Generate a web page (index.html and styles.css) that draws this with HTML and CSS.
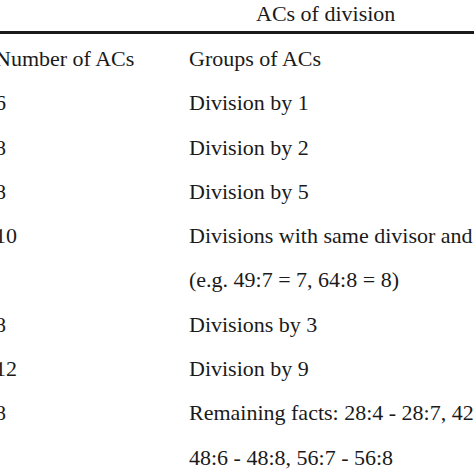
FILE: index.html
```html
<!DOCTYPE html>
<html>
<head>
<meta charset="utf-8">
<link rel="stylesheet" href="styles.css">
</head>
<body>
<div class="page">
  <div class="head">
    <div class="cell"></div>
    <div class="cell title">ACs of division</div>
  </div>
  <div class="rule"></div>
  <div class="body">
    <div class="row"><div class="cell">Number of ACs</div><div class="cell">Groups of ACs</div></div>
    <div class="row"><div class="cell">6</div><div class="cell">Division by 1</div></div>
    <div class="row"><div class="cell">8</div><div class="cell">Division by 2</div></div>
    <div class="row"><div class="cell">8</div><div class="cell">Division by 5</div></div>
    <div class="row"><div class="cell">10</div><div class="cell">Divisions with same divisor and quotient</div></div>
    <div class="row"><div class="cell"></div><div class="cell">(e.g. 49:7 = 7, 64:8 = 8)</div></div>
    <div class="row"><div class="cell">8</div><div class="cell">Divisions by 3</div></div>
    <div class="row"><div class="cell">12</div><div class="cell">Division by 9</div></div>
    <div class="row"><div class="cell">8</div><div class="cell">Remaining facts: 28:4 - 28:7, 42:6 - 42:7,</div></div>
    <div class="row"><div class="cell"></div><div class="cell">48:6 - 48:8, 56:7 - 56:8</div></div>
  </div>
</div>
</body>
</html>
```

FILE: styles.css
```css
html, body {
  margin: 0;
  padding: 0;
  background: #ffffff;
  overflow: hidden;
}
.page {
  width: 474px;
  height: 474px;
  overflow: hidden;
  font-family: "Liberation Serif", "Times New Roman", serif;
  font-size: 22px;
  color: #1a1a1a;
  white-space: nowrap;
}
.head {
  display: grid;
  grid-template-columns: 189px 1fr;
  height: 31px;
  line-height: 28px;
}
.title {
  padding-left: 67px;
}
.rule {
  height: 2.5px;
  width: 474px;
  background-color: #1a1a1a;
}
.body {
  padding-top: 3.5px;
}
.row {
  display: grid;
  grid-template-columns: 194px 1fr;
  margin-left: -5px;
  height: 44.3px;
  line-height: 44.3px;
}
```
